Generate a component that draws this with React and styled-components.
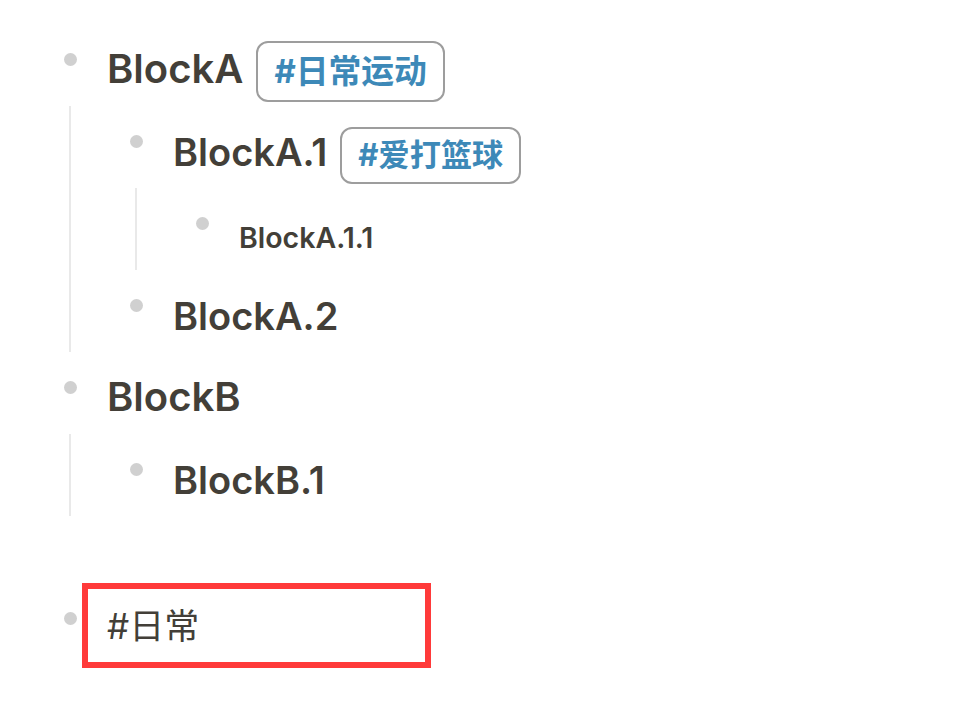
import React from "react";
import styled, { createGlobalStyle } from "styled-components";

const Global = createGlobalStyle`
  html, body { margin: 0; padding: 0; background: #ffffff; }
  body { font-family: Inter, "Noto Sans CJK SC", sans-serif; color: #433f38; }
`;

const LEVELS = [
  { size: 40, lh: 56, pt: 17 },
  { size: 38, lh: 56, pt: 18 },
  { size: 28.5, lh: 40, pt: 30 },
];

const Page = styled.div`
  padding: 24px 0 40px 58px;
`;

const Block = styled.div`
  display: flex;
  flex-direction: column;
`;

const Row = styled.div`
  display: flex;
  align-items: flex-start;
  height: 82px;
`;

const BulletCol = styled.div`
  width: 49px;
  flex: none;
  padding-top: 29px;
  padding-left: 6px;
  box-sizing: border-box;
`;

const Dot = styled.span`
  display: block;
  width: 13px;
  height: 13px;
  border-radius: 50%;
  background: #d0d0d0;
`;

const Content = styled.div`
  display: flex;
  align-items: baseline;
  gap: 13px;
  padding-top: ${(p) => p.$pt}px;
  font-size: ${(p) => p.$size}px;
  line-height: ${(p) => p.$lh}px;
  font-weight: 600;
  white-space: nowrap;
`;

const Tag = styled.span`
  display: inline-flex;
  align-items: center;
  box-sizing: border-box;
  height: 1.85em;
  padding: 0 16px;
  border: 2px solid #9d9d9d;
  border-radius: 12px;
  font-size: 0.82em;
  line-height: 1;
  font-weight: 700;
  color: #3d89b8;
`;

const Children = styled.div`
  margin-left: 11px;
  border-left: 2px solid #e9e9e9;
  padding-left: 53px;
`;

const NoteRow = styled.div`
  display: flex;
  align-items: flex-start;
  margin-top: 67px;
`;

const NoteBox = styled.div`
  margin-left: -25px;
  width: 349px;
  height: 85px;
  box-sizing: border-box;
  border: 6px solid #ff3a3a;
  padding: 16px 0 0 19px;
  font-size: 35px;
  line-height: 43px;
  font-weight: 400;
  color: #433f38;
`;

const data = [
  {
    text: "BlockA",
    tag: "#日常运动",
    children: [
      {
        text: "BlockA.1",
        tag: "#爱打篮球",
        children: [{ text: "BlockA.1.1" }],
      },
      { text: "BlockA.2" },
    ],
  },
  { text: "BlockB", children: [{ text: "BlockB.1" }] },
];

function Node({ node, depth }) {
  const lv = LEVELS[depth];
  return (
    <Block>
      <Row>
        <BulletCol>
          <Dot />
        </BulletCol>
        <Content $pt={lv.pt} $size={lv.size} $lh={lv.lh}>
          <span>{node.text}</span>
          {node.tag && <Tag>{node.tag}</Tag>}
        </Content>
      </Row>
      {node.children && (
        <Children>
          {node.children.map((c, i) => (
            <Node key={i} node={c} depth={depth + 1} />
          ))}
        </Children>
      )}
    </Block>
  );
}

export default function App() {
  return (
    <Page>
      <Global />
      {data.map((n, i) => (
        <Node key={i} node={n} depth={0} />
      ))}
      <NoteRow>
        <BulletCol>
          <Dot />
        </BulletCol>
        <NoteBox>#日常</NoteBox>
      </NoteRow>
    </Page>
  );
}
